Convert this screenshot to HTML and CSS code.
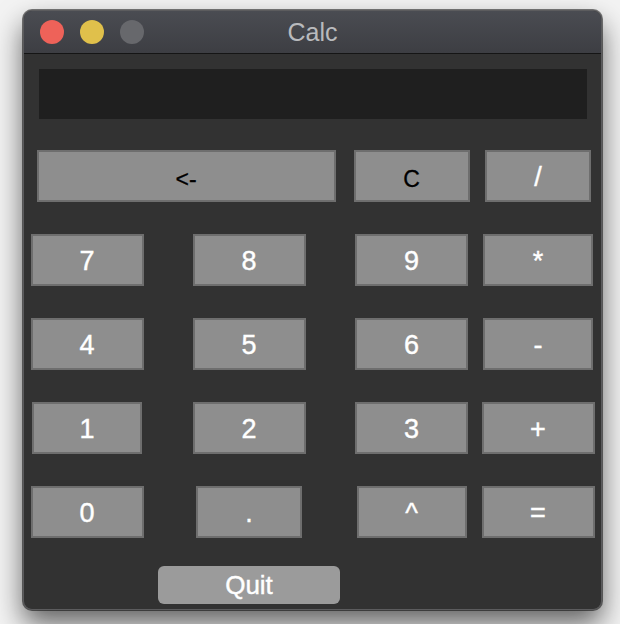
FILE: index.html
```html
<!DOCTYPE html>
<html lang="en">
<head>
  <meta charset="UTF-8" />
  <title>Calc</title>
  <link rel="stylesheet" href="styles.css">
</head>
<body>

<div class="window">
  <div class="titlebar">
    <div class="lights">
      <span class="light close"></span>
      <span class="light minimize"></span>
      <span class="light zoom"></span>
    </div>
    <span class="title">Calc</span>
  </div>

  <div class="content">
    <div class="display" id="display"></div>

    <div class="keypad">
      <button class="key dark span2 back">&lt;-</button>
      <button class="key dark wide">C</button>
      <button class="key narrow">/</button>

      <button class="key">7</button>
      <button class="key">8</button>
      <button class="key">9</button>
      <button class="key slim">*</button>

      <button class="key">4</button>
      <button class="key">5</button>
      <button class="key">6</button>
      <button class="key slim">-</button>

      <button class="key slim">1</button>
      <button class="key">2</button>
      <button class="key">3</button>
      <button class="key">+</button>

      <button class="key">0</button>
      <button class="key narrow">.</button>
      <button class="key slim">^</button>
      <button class="key">=</button>

      <button class="quit">Quit</button>
    </div>
  </div>
</div>

</body>
</html>
```

FILE: styles.css
```css
* {
  box-sizing: border-box;
  margin: 0;
  padding: 0;
}

html {
  background: #f3f3f3;
}

body {
  font-family: 'Liberation Sans', Arial, sans-serif;
  min-height: 624px;
  padding: 10px 0 0 23px;
}

.window {
  width: 579px;
  height: 600px;
  border: 1px solid #5c5c5e;
  border-radius: 9px;
  background: #323232;
  overflow: hidden;
  box-shadow: 0 0 0 1px rgba(0, 0, 0, 0.5), 0 14px 28px rgba(0, 0, 0, 0.6);
  display: flex;
  flex-direction: column;
}

/* title bar */
.titlebar {
  position: relative;
  height: 43px;
  flex-shrink: 0;
  background: linear-gradient(#4a4c52, #3d3e43);
  border-bottom: 1px solid #151515;
  display: flex;
  align-items: center;
  justify-content: center;
}

.lights {
  position: absolute;
  left: 16px;
  top: 9px;
  display: flex;
  gap: 16px;
}

.light {
  width: 24px;
  height: 24px;
  border-radius: 50%;
}

.close { background: #ee6259; }
.minimize { background: #e0c04b; }
.zoom { background: #67686c; }

.title {
  font-size: 25px;
  color: #b9babd;
  margin-top: 1px;
}

/* calculator body */
.content {
  flex: 1;
  padding-top: 15px;
}

.display {
  height: 50px;
  margin: 0 14px 0 15px;
  background: #1f1f1f;
}

.keypad {
  margin-top: 31px;
  display: grid;
  grid-template-columns: 126px 198px 127px 126px;
  grid-template-rows: repeat(5, 52px) 38px;
  row-gap: 32px;
  justify-items: center;
  align-items: stretch;
}

.keypad .quit {
  grid-column: 2;
  margin-top: -4px;
}

.key {
  width: 113px;
  background: #8e8e8e;
  border: 2px solid #6e6e6e;
  color: #ffffff;
  font-family: 'Liberation Sans', Arial, sans-serif;
  font-size: 27px;
  line-height: 1;
  padding-top: 3px;
  -webkit-text-stroke: 0.4px #ffffff;
}

.key.dark {
  color: #000000;
  font-size: 23px;
  padding-top: 7px;
  -webkit-text-stroke: 0.3px #000000;
}

.key.span2 {
  grid-column: span 2;
  width: 299px;
}

.key.wide { width: 116px; }
.key.narrow { width: 106px; }
.key.slim { width: 110px; }

.quit {
  width: 182px;
  height: 38px;
  background: #9b9b9b;
  border: none;
  border-radius: 6px;
  color: #ffffff;
  font-family: 'Liberation Sans', Arial, sans-serif;
  font-size: 26px;
  line-height: 1;
  -webkit-text-stroke: 0.4px #ffffff;
}
```
